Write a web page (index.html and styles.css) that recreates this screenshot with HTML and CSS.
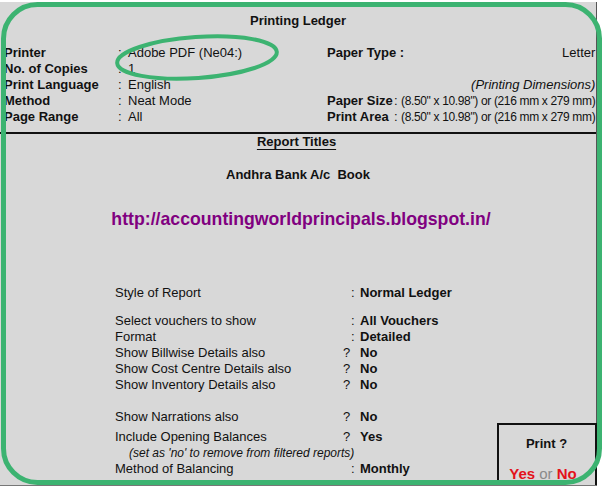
FILE: index.html
```html
<!DOCTYPE html>
<html>
<head>
<meta charset="utf-8">
<link rel="stylesheet" href="styles.css">
</head>
<body>
<div class="page">
  <div class="panel">
    <div class="title">Printing Ledger</div>
    <div class="header">
      <div class="hleft">
        <div class="hrow"><span class="hl">Printer</span><span class="hc">:</span><span>Adobe PDF (Ne04:)</span></div>
        <div class="hrow"><span class="hl">No. of Copies</span><span class="hc">:</span><span>1</span></div>
        <div class="hrow"><span class="hl">Print Language</span><span class="hc">:</span><span>English</span></div>
        <div class="hrow"><span class="hl">Method</span><span class="hc">:</span><span>Neat Mode</span></div>
        <div class="hrow"><span class="hl">Page Range</span><span class="hc">:</span><span>All</span></div>
      </div>
      <div class="hright">
        <div class="rrow"><span class="rl">Paper Type :</span><span>Letter</span></div>
        <div class="rrow"></div>
        <div class="rrow note">(Printing Dimensions)</div>
        <div class="rrow"><span class="rl2">Paper Size</span><span class="rc">:</span><span class="dim">(8.50" x 10.98") or (216 mm x 279 mm)</span></div>
        <div class="rrow"><span class="rl2">Print Area</span><span class="rc">:</span><span class="dim">(8.50" x 10.98") or (216 mm x 279 mm)</span></div>
      </div>
    </div>
    <div class="rule"></div>
    <div class="rt"><span>Report Titles</span></div>
    <div class="bank">Andhra Bank A/c&nbsp; Book</div>
    <div class="url">http://accountingworldprincipals.blogspot.in/</div>
    <div class="bottom">
      <div class="list">
        <div class="lrow"><span>Style of Report</span><span class="mc">:</span><span class="val">Normal Ledger</span></div>
        <div class="lrow gap12"><span>Select vouchers to show</span><span class="mc">:</span><span class="val">All Vouchers</span></div>
        <div class="lrow"><span>Format</span><span class="mc">:</span><span class="val">Detailed</span></div>
        <div class="lrow"><span>Show Billwise Details also</span><span class="mq">?</span><span class="val">No</span></div>
        <div class="lrow"><span>Show Cost Centre Details also</span><span class="mq">?</span><span class="val">No</span></div>
        <div class="lrow"><span>Show Inventory Details also</span><span class="mq">?</span><span class="val">No</span></div>
        <div class="lrow gap16"><span>Show Narrations also</span><span class="mq">?</span><span class="val">No</span></div>
        <div class="lrow gap4"><span>Include Opening Balances</span><span class="mq">?</span><span class="val">Yes</span></div>
        <div class="subnote">(set as 'no' to remove from filtered reports)</div>
        <div class="lrow"><span>Method of Balancing</span><span class="mc">:</span><span class="val">Monthly</span></div>
      </div>
      <div class="printbox">
        <div class="pq">Print ?</div>
        <div class="yn"><span class="red">Yes</span> <span class="or">or</span> <span class="red">No</span></div>
      </div>
    </div>
  </div>
  <svg class="overlay" width="603" height="488" viewBox="0 0 603 488">
    <rect x="3.5" y="4.5" width="596" height="478" rx="34" ry="34" fill="none" stroke="#3cb371" stroke-width="5"/>
    <ellipse cx="197" cy="57.5" rx="80" ry="20.5" transform="rotate(-4 197 57.5)" fill="none" stroke="#3cb371" stroke-width="4"/>
  </svg>
</div>
</body>
</html>
```

FILE: styles.css
```css
body {
  margin: 0;
  background: #ffffff;
  font-family: "Liberation Sans", Arial, sans-serif;
  color: #111111;
}

.page {
  position: relative;
  width: 603px;
  height: 488px;
  padding-top: 2px;
  box-sizing: border-box;
  overflow: hidden;
}

.panel {
  width: 597px;
  height: 484px;
  background: #d8d8d8;
  border-right: 1px solid #555555;
  border-bottom: 1px solid #777777;
  box-sizing: border-box;
  display: flex;
  flex-direction: column;
  font-size: 13px;
  line-height: 16px;
}

.title {
  margin-top: 11px;
  text-align: center;
  font-weight: bold;
}

.header {
  display: grid;
  grid-template-columns: 323px 1fr;
  margin-top: 16px;
  padding: 0 2px 0 4px;
}

.hrow {
  display: flex;
  height: 16px;
  white-space: nowrap;
}

.hl {
  width: 114px;
  font-weight: bold;
}

.hc {
  width: 10px;
}

.rrow {
  display: flex;
  height: 16px;
  white-space: nowrap;
}

.rl {
  flex: 1;
  font-weight: bold;
}

.note {
  justify-content: flex-end;
  font-style: italic;
}

.rl2 {
  width: 67px;
  font-weight: bold;
}

.rc {
  width: 7px;
}

.dim {
  flex: 1;
  text-align: right;
  font-size: 12px;
  letter-spacing: -0.35px;
}

.rule {
  margin-top: 7px;
  border-top: 2px solid #111111;
}

.rt {
  text-align: center;
  font-weight: bold;
  padding-right: 3px;
}

.rt span {
  text-decoration: underline;
  text-underline-offset: 3px;
  text-decoration-thickness: 1px;
}

.bank {
  margin-top: 17px;
  text-align: center;
  font-weight: bold;
}

.url {
  margin-top: 26px;
  padding-left: 6px;
  text-align: center;
  font-weight: bold;
  font-size: 17.7px;
  line-height: 20px;
  color: #800080;
}

.bottom {
  flex: 1;
  display: flex;
  justify-content: space-between;
  align-items: flex-end;
  margin-top: 56px;
}

.list {
  align-self: flex-start;
  padding-left: 115px;
}

.lrow {
  display: grid;
  grid-template-columns: 228px 17px auto;
  height: 16px;
  white-space: nowrap;
}

.mc {
  padding-left: 8px;
}

.mq {
  padding-left: 0;
}

.val {
  font-weight: bold;
}

.gap12 {
  margin-top: 12px;
}

.gap16 {
  margin-top: 16px;
}

.gap4 {
  margin-top: 4px;
}

.subnote {
  height: 16px;
  padding-left: 14px;
  font-style: italic;
  font-size: 12px;
  white-space: nowrap;
}

.printbox {
  width: 100px;
  height: 62px;
  margin-right: -1px;
  border: 2px solid #111111;
  border-bottom: none;
  box-sizing: border-box;
  text-align: center;
  padding-top: 11px;
}

.pq {
  font-weight: bold;
  padding-right: 1px;
}

.yn {
  margin-top: 14px;
  padding-right: 8px;
  font-size: 15px;
  white-space: nowrap;
}

.red {
  color: #e3121b;
  font-weight: bold;
}

.or {
  color: #8a8a8a;
}

.overlay {
  position: absolute;
  left: 0;
  top: 0;
  pointer-events: none;
}
```
